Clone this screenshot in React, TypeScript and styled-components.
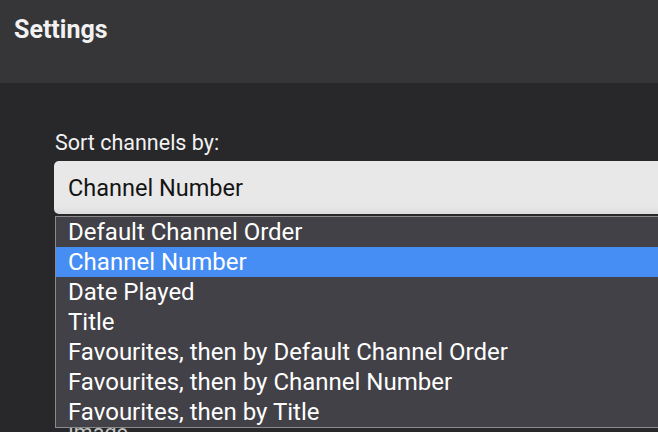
import { createGlobalStyle } from "styled-components";
import styled from "styled-components";

const GlobalStyle = createGlobalStyle`
  html, body {
    margin: 0;
    padding: 0;
    background: #28282a;
    font-family: Roboto, "Noto Sans", sans-serif;
    overflow: hidden;
  }
`;

const Page = styled.div`
  width: 658px;
  height: 432px;
  overflow: hidden;
  background: #28282a;
`;

const Header = styled.header`
  height: 83px;
  background: #363638;
  padding: 15px 14px 0;
  box-sizing: border-box;
`;

const Title = styled.h1`
  margin: 0;
  font-size: 25px;
  font-weight: 700;
  color: #f2f2f2;
  line-height: 30px;
`;

const Content = styled.main`
  padding: 46px 0 0 54px;
`;

const Field = styled.div<{ $gap?: number }>`
  display: flex;
  flex-direction: column;
  margin-top: ${(p) => p.$gap ?? 0}px;
`;

const Label = styled.label<{ $muted?: boolean }>`
  font-size: 21.5px;
  line-height: 28px;
  color: ${(p) => (p.$muted ? "#c4c4c4" : "#f2f2f2")};
  margin-bottom: 4px;
  padding-left: ${(p) => (p.$muted ? "14px" : "1px")};
`;

const SelectWrap = styled.div`
  position: relative;
`;

const SelectBox = styled.div`
  height: 53px;
  width: 640px;
  box-sizing: border-box;
  background: linear-gradient(#e8e8e8 85%, #dcdcdc);
  border-radius: 5px;
  padding-left: 14px;
  display: flex;
  align-items: center;
  font-size: 23.5px;
  color: #141414;
`;

const OptionList = styled.ul`
  position: absolute;
  top: 55px;
  left: 1px;
  width: 640px;
  margin: 0;
  padding: 0;
  list-style: none;
  background: #424147;
  border: 1px solid #8a8a8a;
  z-index: 10;
`;

const Option = styled.li<{ $active?: boolean }>`
  height: 30px;
  line-height: 30px;
  padding-left: 12px;
  font-size: 24px;
  color: #ffffff;
  background: ${(p) => (p.$active ? "#478ef4" : "transparent")};
  white-space: nowrap;
`;

const options = [
  "Default Channel Order",
  "Channel Number",
  "Date Played",
  "Title",
  "Favourites, then by Default Channel Order",
  "Favourites, then by Channel Number",
  "Favourites, then by Title",
];

const App = () => {
  const selected = "Channel Number";

  return (
    <Page>
      <GlobalStyle />
      <Header>
        <Title>Settings</Title>
      </Header>

      <Content>
        <Field>
          <Label>Sort channels by:</Label>
          <SelectWrap>
            <SelectBox>{selected}</SelectBox>

            {/* Open dropdown */}
            <OptionList>
              {options.map((o) => (
                <Option key={o} $active={o === selected}>
                  {o}
                </Option>
              ))}
            </OptionList>
          </SelectWrap>
        </Field>

        {/* Next setting, mostly hidden behind the open list */}
        <Field $gap={205}>
          <Label $muted>Image</Label>
        </Field>
      </Content>
    </Page>
  );
};

export default App;
